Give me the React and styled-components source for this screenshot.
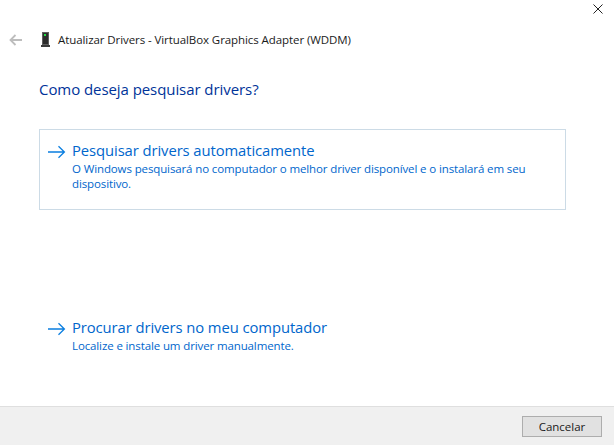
import React from "react";
import styled, { createGlobalStyle } from "styled-components";

const Global = createGlobalStyle`
  html, body { margin: 0; padding: 0; background: #fff; }
  * { box-sizing: border-box; }
`;

const Wizard = styled.div`
  width: 614px;
  height: 445px;
  display: flex;
  flex-direction: column;
  background: #fff;
  font-family: "Open Sans", "Noto Sans", sans-serif;
  overflow: hidden;
`;

const TitleBar = styled.div`
  height: 15px;
  display: flex;
  justify-content: flex-end;
  padding-right: 11px;
  padding-top: 2px;
`;

const CloseButton = styled.button`
  width: 10px;
  height: 10px;
  padding: 0;
  border: 0;
  background: none;
  display: block;
`;

const Header = styled.div`
  height: 49px;
  display: flex;
  align-items: center;
  padding-left: 9px;
`;

const BackButton = styled.button`
  width: 13px;
  height: 12px;
  padding: 0;
  border: 0;
  background: none;
  margin-right: 19px;
  display: block;
`;

const DeviceIcon = styled.svg`
  width: 9px;
  height: 15px;
  margin-right: 8px;
  flex: none;
`;

const HeaderTitle = styled.span`
  font-size: 11.5px;
  color: #1a1a1a;
  letter-spacing: -0.08px;
  white-space: nowrap;
`;

const Content = styled.main`
  flex: 1;
  padding: 14px 48px 0 39px;
  display: flex;
  flex-direction: column;
`;

const Heading = styled.h1`
  margin: 0;
  height: 22px;
  line-height: 22px;
  font-size: 15px;
  font-weight: 400;
  color: #003399;
  letter-spacing: -0.07px;
`;

const Option = styled.div`
  display: grid;
  grid-template-columns: 25px 1fr;
  height: 81px;
  padding: 10px 7px 0 7px;
  border: 1px solid ${(p) => (p.$focused ? "#ccdbe6" : "transparent")};
  margin-top: ${(p) => p.$gap}px;
`;

const Arrow = styled.svg`
  width: 19px;
  height: 14px;
  margin-top: 5px;
`;

const OptionTitle = styled.div`
  font-size: 14.8px;
  line-height: 20px;
  color: #0066cc;
  letter-spacing: -0.08px;
  white-space: nowrap;
`;

const OptionText = styled.div`
  font-size: 11.5px;
  line-height: 15px;
  margin-top: 1px;
  color: #0066cc;
  letter-spacing: -0.12px;
`;

const Footer = styled.footer`
  height: 39px;
  background: #f0f0f0;
  border-top: 1px solid #dfdfdf;
  display: flex;
  justify-content: flex-end;
  align-items: flex-start;
  padding: 9px 12px 0 0;
`;

const CancelButton = styled.button`
  width: 80px;
  height: 21px;
  padding: 0;
  background: #e1e1e1;
  border: 1px solid #adadad;
  font-family: inherit;
  font-size: 11.5px;
  color: #1a1a1a;
`;

const ArrowIcon = () => (
  <Arrow viewBox="0 0 19 14" fill="none" stroke="#0a7ee0" strokeWidth="1.3">
    <path d="M1 7h16M11.5 1.2 17.4 7l-5.9 5.8" />
  </Arrow>
);

export default function App() {
  return (
    <Wizard>
      <Global />
      <TitleBar>
        <CloseButton aria-label="Fechar">
          <svg width="10" height="10" viewBox="0 0 10 10" fill="none" stroke="#222" strokeWidth="1">
            <path d="M.5.5l9 9M9.5.5l-9 9" />
          </svg>
        </CloseButton>
      </TitleBar>
      <Header>
        <BackButton aria-label="Voltar">
          <svg width="13" height="12" viewBox="0 0 13 12" fill="none" stroke="#bdbdbd" strokeWidth="1.8">
            <path d="M13 6H1.5M6.5 1 1.5 6l5 5" />
          </svg>
        </BackButton>
        <DeviceIcon viewBox="0 0 9 15">
          <rect x="1" y="0" width="7" height="13" fill="#5e5e5e" />
          <rect x="2" y="1" width="5" height="11" fill="#2c2c2c" />
          <rect x="3" y="2" width="2" height="2" fill="#22dd44" />
          <rect x="0" y="13" width="9" height="2" fill="#3a3a3a" />
        </DeviceIcon>
        <HeaderTitle>Atualizar Drivers - VirtualBox Graphics Adapter (WDDM)</HeaderTitle>
      </Header>
      <Content>
        <Heading>Como deseja pesquisar drivers?</Heading>
        <Option $focused $gap={29}>
          <ArrowIcon />
          <div>
            <OptionTitle>Pesquisar drivers automaticamente</OptionTitle>
            <OptionText>
              O Windows pesquisará no computador o melhor driver disponível e o instalará em seu dispositivo.
            </OptionText>
          </div>
        </Option>
        <Option $gap={96}>
          <ArrowIcon />
          <div>
            <OptionTitle>Procurar drivers no meu computador</OptionTitle>
            <OptionText>Localize e instale um driver manualmente.</OptionText>
          </div>
        </Option>
      </Content>
      <Footer>
        <CancelButton>Cancelar</CancelButton>
      </Footer>
    </Wizard>
  );
}
